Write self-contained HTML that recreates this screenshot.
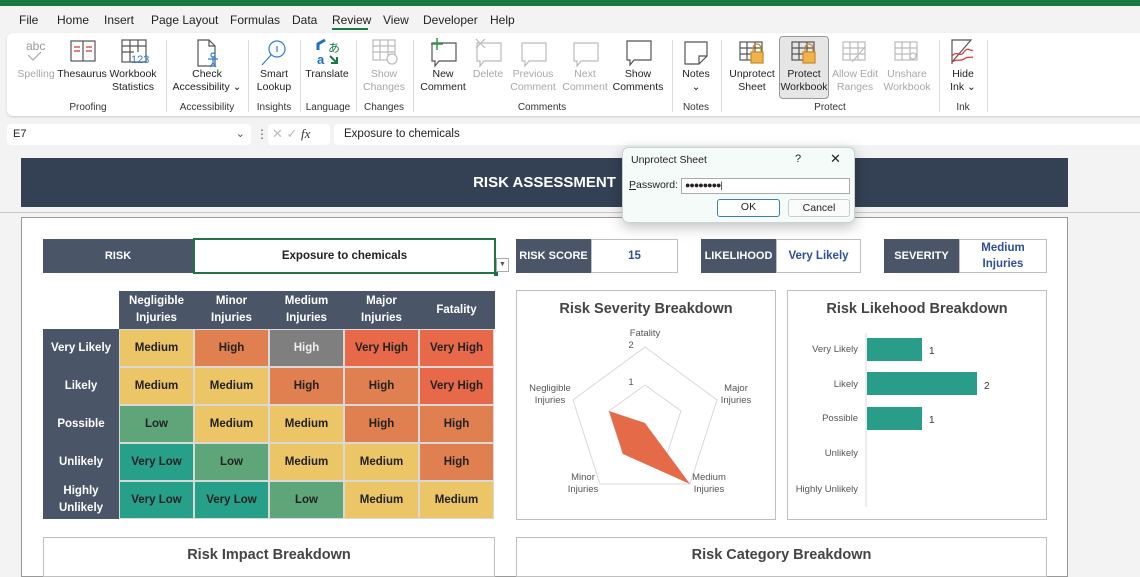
<!DOCTYPE html>
<html><head><meta charset="utf-8"><style>
*{margin:0;padding:0;box-sizing:border-box}
body{width:1140px;height:570px;overflow:hidden;background:#f3f3f3;font-family:"Liberation Sans",sans-serif;position:relative;color:#222}
.a{position:absolute}
.tab{position:absolute;top:13px;font-size:12px;color:#222}
.rb{position:absolute;top:68px;font-size:10.5px;line-height:13px;text-align:center;color:#222;transform:translateX(-50%);white-space:nowrap}
.dis{color:#a8a8a8}
.grp{position:absolute;top:102px;font-size:10px;color:#333;transform:translateX(-50%);white-space:nowrap}
.sep{position:absolute;top:40px;width:1px;height:72px;background:#dcdcdc}
.dk{background:#4a5568;color:#fff;font-weight:bold;font-size:11px;display:flex;align-items:center;justify-content:center;text-align:center}
.wb{background:#fff;border:1px solid #bfbfbf;color:#2f4f9a;font-weight:bold;font-size:11.5px;display:flex;align-items:center;justify-content:center;text-align:center;line-height:16px}
.cell{position:absolute;width:75px;height:38px;display:flex;align-items:center;justify-content:center;font-weight:bold;font-size:11.5px;color:#222;border:1px solid #d9d9d9;text-align:center}
.Y{background:#ecc567}.O{background:#e07f4f}.G{background:#7f7f7f;color:#eee}.R{background:#e8694a}.L{background:#5ea67a}.T{background:#27a08a}
.box{position:absolute;background:#fff;border:1px solid #bfbfbf}
.ttl{position:absolute;width:100%;text-align:center;font-weight:bold;font-size:14.5px;color:#444}
</style></head><body>
<div class="a" style="left:0;top:0;width:1140px;height:6px;background:#177a43"></div>
<div class="tab" style="left:19px">File</div>
<div class="tab" style="left:57px">Home</div>
<div class="tab" style="left:104px">Insert</div>
<div class="tab" style="left:151px">Page Layout</div>
<div class="tab" style="left:230px">Formulas</div>
<div class="tab" style="left:292px">Data</div>
<div class="tab" style="left:332px">Review</div>
<div class="a" style="left:332px;top:28px;width:36px;height:2px;background:#177a43"></div>
<div class="tab" style="left:383px">View</div>
<div class="tab" style="left:423px">Developer</div>
<div class="tab" style="left:490px">Help</div>

<div class="a" style="left:7px;top:33px;width:1140px;height:83px;background:#fff;border-radius:6px;box-shadow:0 1px 2px #ccc"></div>
<div class="a" style="left:779px;top:36px;width:50px;height:63px;background:#e6e6e6;border:1px solid #999;border-radius:4px"></div>
<svg class="a" style="left:0;top:0" width="1140" height="70">
<g fill="none" stroke-width="1.2">
<text x="26" y="50" font-size="12" fill="#999" font-family="Liberation Sans">abc</text>
<path d="M28 55l5 5 8-8" stroke="#aaa"/>
<rect x="71" y="41" width="24" height="20" stroke="#555"/><line x1="83" y1="41" x2="83" y2="61" stroke="#555"/>
<path d="M74 47h6M74 51h6M86 47h6M86 51h6" stroke="#d33"/>
<rect x="122" y="40" width="24" height="22" stroke="#555"/><path d="M122 46h24M122 52h12M130 40v22M138 40v12" stroke="#555"/>
<text x="131" y="63" font-size="11" fill="#2a7fd4" font-family="Liberation Sans">123</text>
<path d="M198 40h11l6 6v20h-17z M209 40v6h6" stroke="#555"/>
<circle cx="213" cy="55" r="2" stroke="#2a7fd4"/><path d="M208 59h10M213 57v6l-3 4M213 63l3 4" stroke="#2a7fd4"/>
<circle cx="277" cy="49" r="8" stroke="#2a7fd4"/><path d="M271 55l-9 10M277 46v6" stroke="#2a7fd4"/>
<path d="M325 40l-7 4v6" stroke="#1e6fc8" stroke-width="3"/><text x="317" y="64" font-size="13" fill="#1e6fc8" font-weight="bold" font-family="Liberation Sans">a</text>
<text x="328" y="52" font-size="12" fill="#177a43" font-family="Noto Sans CJK JP">あ</text><path d="M330 56l7 7M337 57v6h-6" stroke="#177a43" stroke-width="2"/>
<rect x="373" y="40" width="22" height="20" stroke="#bbb"/><path d="M373 46h22M373 52h22M380 40v20M388 40v20" stroke="#bbb"/><circle cx="392" cy="59" r="5" stroke="#bbb" fill="#fff"/>
<path d="M432 43h24v18h-17l-4 5v-5h-3z" stroke="#555"/><path d="M437 38v12M431 44h12" stroke="#2a9a4a" stroke-width="1.5"/>
<path d="M477 43h24v18h-17l-4 5v-5h-3z" stroke="#bbb"/><path d="M476 39l9 9M485 39l-9 9" stroke="#bbb"/>
<path d="M522 43h24v18h-17l-4 5v-5h-3z" stroke="#bbb"/>
<path d="M574 43h24v18h-17l-4 5v-5h-3z" stroke="#bbb"/>
<path d="M627 41h24v19h-17l-4 5v-5h-3z" stroke="#555"/>
<path d="M685 42h22v14l-8 8h-14z M699 64v-8h8" stroke="#555"/>
<rect x="740" y="42" width="22" height="18" stroke="#555"/><path d="M740 48h22M740 54h22M747 42v18M755 42v18" stroke="#555"/>
<rect x="751" y="52" width="12" height="11" fill="#f0b24a" stroke="#c98a20"/><path d="M753 52v-4a4 4 0 0 1 8 0v4" stroke="#c98a20"/>
<rect x="792" y="42" width="22" height="18" stroke="#555"/><path d="M792 48h22M792 54h22M799 42v18M807 42v18" stroke="#555"/>
<rect x="803" y="52" width="12" height="11" fill="#f0b24a" stroke="#c98a20"/><path d="M805 52v-4a4 4 0 0 1 8 0v4" stroke="#c98a20"/>
<rect x="843" y="42" width="22" height="18" stroke="#bbb"/><path d="M843 48h22M843 54h22M850 42v18M858 42v18M852 62l13-15" stroke="#bbb"/>
<rect x="895" y="42" width="22" height="18" stroke="#bbb"/><path d="M895 48h22M895 54h22M902 42v18M910 42v18" stroke="#bbb"/><circle cx="913" cy="56" r="3" stroke="#bbb" fill="#fff"/>
<path d="M952 40h19l-19 22z M952 40v24" stroke="#555"/><path d="M952 56c5-6 8 2 12-4s6 0 9-2M952 62c5-4 8 0 12-3s6-1 9-2" stroke="#d33"/>
</g></svg>
<div class="rb dis" style="left:36px">Spelling</div>
<div class="rb" style="left:82px">Thesaurus</div>
<div class="rb" style="left:133px">Workbook<br>Statistics</div>
<div class="rb" style="left:207px">Check<br>Accessibility ⌄</div>
<div class="rb" style="left:274px">Smart<br>Lookup</div>
<div class="rb" style="left:327px">Translate</div>
<div class="rb dis" style="left:384px">Show<br>Changes</div>
<div class="rb" style="left:443px">New<br>Comment</div>
<div class="rb dis" style="left:488px">Delete</div>
<div class="rb dis" style="left:533px">Previous<br>Comment</div>
<div class="rb dis" style="left:585px">Next<br>Comment</div>
<div class="rb" style="left:638px">Show<br>Comments</div>
<div class="rb" style="left:696px">Notes<br>⌄</div>
<div class="rb" style="left:752px">Unprotect<br>Sheet</div>
<div class="rb" style="left:804px">Protect<br>Workbook</div>
<div class="rb dis" style="left:855px">Allow Edit<br>Ranges</div>
<div class="rb dis" style="left:907px">Unshare<br>Workbook</div>
<div class="rb" style="left:963px">Hide<br>Ink ⌄</div>
<div class="grp" style="left:88px">Proofing</div>
<div class="grp" style="left:207px">Accessibility</div>
<div class="grp" style="left:274px">Insights</div>
<div class="grp" style="left:328px">Language</div>
<div class="grp" style="left:384px">Changes</div>
<div class="grp" style="left:542px">Comments</div>
<div class="grp" style="left:696px">Notes</div>
<div class="grp" style="left:830px">Protect</div>
<div class="grp" style="left:963px">Ink</div>
<div class="sep" style="left:166px"></div><div class="sep" style="left:248px"></div><div class="sep" style="left:300px"></div><div class="sep" style="left:356px"></div><div class="sep" style="left:413px"></div><div class="sep" style="left:672px"></div><div class="sep" style="left:721px"></div><div class="sep" style="left:939px"></div><div class="sep" style="left:987px"></div>

<div class="a" style="left:7px;top:124px;width:244px;height:21px;background:#fff;border-radius:4px;font-size:11px;padding:4px 6px">E7<span style="position:absolute;right:6px;top:3px;color:#555">⌄</span></div>
<div class="a" style="left:256px;top:127px;font-size:12px;color:#555">⋮</div>
<div class="a" style="left:268px;top:124px;width:62px;height:21px;background:#fff;border-radius:4px;font-size:13px;color:#bbb;padding:2px 4px">✕ ✓ <i style="color:#333;font-family:'Liberation Serif'">fx</i></div>
<div class="a" style="left:334px;top:124px;width:820px;height:21px;background:#fff;border-radius:4px;font-size:11.5px;padding:4px 10px">Exposure to chemicals</div>

<div class="a" style="left:21px;top:158px;width:1047px;height:49px;background:#344154;color:#fff;font-weight:bold;font-size:15px;text-align:center;line-height:49px">RISK ASSESSMENT</div>
<div class="a" style="left:0;top:212px;width:1140px;height:1px;background:#c8c8c8"></div>
<div class="box" style="left:21px;top:217px;width:1047px;height:360px;border-color:#999"></div>

<div class="a dk" style="left:43px;top:239px;width:150px;height:34px">RISK</div>
<div class="a" style="left:193px;top:238px;width:303px;height:36px;background:#fff;border:2px solid #217346;font-weight:bold;font-size:11.5px;display:flex;align-items:center;justify-content:center">Exposure to chemicals</div>
<div class="a" style="left:494px;top:272px;width:4px;height:4px;background:#217346"></div>
<div class="a" style="left:496px;top:258px;width:13px;height:14px;background:#fff;border:1px solid #aaa;font-size:7px;color:#555;text-align:center;line-height:12px">▼</div>
<div class="a dk" style="left:516px;top:239px;width:75px;height:34px">RISK SCORE</div>
<div class="a wb" style="left:591px;top:239px;width:87px;height:34px">15</div>
<div class="a dk" style="left:701px;top:239px;width:75px;height:34px">LIKELIHOOD</div>
<div class="a wb" style="left:776px;top:239px;width:85px;height:34px">Very Likely</div>
<div class="a dk" style="left:884px;top:239px;width:75px;height:34px">SEVERITY</div>
<div class="a wb" style="left:959px;top:239px;width:88px;height:34px">Medium<br>Injuries</div>

<div class="a dk" style="left:119px;top:291px;width:376px;height:38px;font-size:11.5px;justify-content:flex-start;line-height:17px">
<span style="width:75px">Negligible<br>Injuries</span><span style="width:75px">Minor<br>Injuries</span><span style="width:75px">Medium<br>Injuries</span><span style="width:75px">Major<br>Injuries</span><span style="width:75px">Fatality</span></div>
<div class="a dk" style="left:43px;top:329px;width:76px;height:190px;flex-direction:column;font-size:11.5px;line-height:17px">
<div style="height:38px;display:flex;align-items:center">Very Likely</div><div style="height:38px;display:flex;align-items:center">Likely</div><div style="height:38px;display:flex;align-items:center">Possible</div><div style="height:38px;display:flex;align-items:center">Unlikely</div><div style="height:38px;display:flex;align-items:center">Highly<br>Unlikely</div></div>
<div class="cell Y" style="left:119px;top:329px">Medium</div><div class="cell O" style="left:194px;top:329px">High</div><div class="cell G" style="left:269px;top:329px">High</div><div class="cell R" style="left:344px;top:329px">Very High</div><div class="cell R" style="left:419px;top:329px">Very High</div>
<div class="cell Y" style="left:119px;top:367px">Medium</div><div class="cell Y" style="left:194px;top:367px">Medium</div><div class="cell O" style="left:269px;top:367px">High</div><div class="cell O" style="left:344px;top:367px">High</div><div class="cell R" style="left:419px;top:367px">Very High</div>
<div class="cell L" style="left:119px;top:405px">Low</div><div class="cell Y" style="left:194px;top:405px">Medium</div><div class="cell Y" style="left:269px;top:405px">Medium</div><div class="cell O" style="left:344px;top:405px">High</div><div class="cell O" style="left:419px;top:405px">High</div>
<div class="cell T" style="left:119px;top:443px">Very Low</div><div class="cell L" style="left:194px;top:443px">Low</div><div class="cell Y" style="left:269px;top:443px">Medium</div><div class="cell Y" style="left:344px;top:443px">Medium</div><div class="cell O" style="left:419px;top:443px">High</div>
<div class="cell T" style="left:119px;top:481px">Very Low</div><div class="cell T" style="left:194px;top:481px">Very Low</div><div class="cell L" style="left:269px;top:481px">Low</div><div class="cell Y" style="left:344px;top:481px">Medium</div><div class="cell Y" style="left:419px;top:481px">Medium</div>

<div class="box" style="left:516px;top:290px;width:260px;height:230px"><div class="ttl" style="top:10px">Risk Severity Breakdown</div></div>
<svg class="a" style="left:516px;top:290px" width="260" height="230"><g transform="translate(-516,-290)">
<polygon points="645,347 717,400 690,484 600,484 573,400" fill="none" stroke="#d9d9d9"/>
<polygon points="645,385 681,411 667,454 623,454 609,411" fill="none" stroke="#d9d9d9"/>
<polygon points="645,423 645,423 690,484 623,454 609,411" fill="#e56b48"/>
<g font-family="Liberation Sans" font-size="9.5" fill="#555" text-anchor="middle">
<text x="645" y="336">Fatality</text><text x="631" y="348">2</text><text x="631" y="385">1</text>
<text x="550" y="391">Negligible</text><text x="550" y="403">Injuries</text>
<text x="736" y="391">Major</text><text x="736" y="403">Injuries</text>
<text x="583" y="480">Minor</text><text x="583" y="492">Injuries</text>
<text x="709" y="480">Medium</text><text x="709" y="492">Injuries</text></g></g></svg>

<div class="box" style="left:787px;top:290px;width:260px;height:230px"><div class="ttl" style="top:10px">Risk Likehood Breakdown</div></div>
<svg class="a" style="left:787px;top:290px" width="260" height="230"><g transform="translate(-787,-290)">
<line x1="866" y1="333" x2="866" y2="507" stroke="#d9d9d9"/>
<rect x="867" y="338" width="55" height="23" fill="#2a9d8a"/><rect x="867" y="372" width="110" height="23" fill="#2a9d8a"/><rect x="867" y="407" width="55" height="23" fill="#2a9d8a"/>
<g font-family="Liberation Sans" font-size="9.5" fill="#555" text-anchor="end">
<text x="858" y="352">Very Likely</text><text x="858" y="387">Likely</text><text x="858" y="421">Possible</text><text x="858" y="456">Unlikely</text><text x="858" y="492">Highly Unlikely</text></g>
<g font-family="Liberation Sans" font-size="10" fill="#333"><text x="929" y="354">1</text><text x="984" y="389">2</text><text x="929" y="423">1</text></g></g></svg>

<div class="box" style="left:43px;top:537px;width:452px;height:40px"><div class="ttl" style="top:9px">Risk Impact Breakdown</div></div>
<div class="box" style="left:516px;top:537px;width:531px;height:40px"><div class="ttl" style="top:9px">Risk Category Breakdown</div></div>

<div class="a" style="left:622px;top:147px;width:233px;height:76px;background:#f4fbf9;border:1px solid #c9d3d1;border-radius:6px;box-shadow:0 4px 14px rgba(0,0,0,.25);font-size:10.5px">
<div class="a" style="left:8px;top:6px">Unprotect Sheet</div>
<div class="a" style="left:172px;top:5px;font-size:11px">?</div>
<div class="a" style="left:207px;top:3px;font-size:13px">✕</div>
<div class="a" style="left:6px;top:31px"><u>P</u>assword:</div>
<div class="a" style="left:58px;top:30px;width:169px;height:16px;background:#fff;border:1px solid #aaa;font-size:9px;padding:1px 3px;letter-spacing:-1px">●●●●●●●●|</div>
<div class="a" style="left:94px;top:51px;width:63px;height:18px;background:#fff;border:1.5px solid #3c7fb1;border-radius:3px;text-align:center;line-height:15px">OK</div>
<div class="a" style="left:165px;top:51px;width:62px;height:18px;background:#fbfbfb;border:1px solid #ccc;border-radius:3px;text-align:center;line-height:16px">Cancel</div>
</div>
</body></html>
